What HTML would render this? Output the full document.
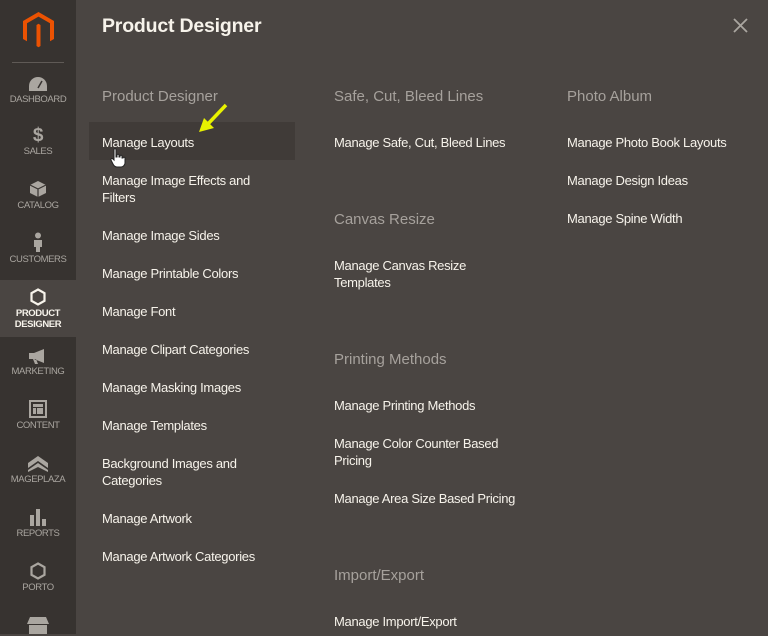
<!DOCTYPE html>
<html><head><style>
body{margin:0;width:768px;height:634px;overflow:hidden;background:#4a4542;font-family:"Liberation Sans",sans-serif;position:relative}
#sb{position:absolute;left:0;top:0;width:76px;height:634px;background:#373330}
.ni{position:absolute;left:0;width:76px;text-align:center;color:#aaa6a0;font-size:9.5px;letter-spacing:-0.4px}
.ni svg{display:block;margin:0 auto 2px}
.act{background:#4a4542;color:#f7f3eb}
.t{position:absolute;color:#f7f3eb;font-size:13px;line-height:17px;letter-spacing:-0.3px}
.h{position:absolute;color:#a6a19c;font-size:15px}
</style></head><body>
<div id="sb">
<svg style="position:absolute;left:23px;top:12px" width="31" height="36" viewBox="0 0 31 36"><path d="M15.5 0 L31 9 V27 L27 29.3 V11.3 L15.5 4.6 L4 11.3 V29.3 L0 27 V9 Z M13.5 13 L15.5 11.8 L17.5 13 V34 L15.5 35.2 L13.5 34 Z" fill="#eb5202"/></svg>
<div style="position:absolute;left:12px;top:62px;width:52px;height:1px;background:#5f5a56"></div>
<div class="ni" style="top:76px"><svg width="20" height="16" viewBox="0 0 20 16"><path d="M10 1A9 9 0 0 0 1 10v5h18v-5A9 9 0 0 0 10 1z" fill="#aaa6a0"/><path d="M10 12L14 5" stroke="#373330" stroke-width="1.5"/></svg>DASHBOARD</div>
<div class="ni" style="top:126px"><div style="font-size:19px;font-weight:bold;line-height:20px">$</div>SALES</div>
<div class="ni" style="top:180px"><svg width="18" height="18" viewBox="0 0 18 18"><path d="M9 1L17 5V13L9 17L1 13V5Z" fill="#aaa6a0"/><path d="M1 5L9 9L17 5M9 9V17" stroke="#373330" stroke-width="1.2" fill="none"/></svg>CATALOG</div>
<div class="ni" style="top:232px"><svg width="12" height="20" viewBox="0 0 12 20"><circle cx="6" cy="3.5" r="3" fill="#aaa6a0"/><path d="M2 8h8v7H8v5H4v-5H2z" fill="#aaa6a0"/></svg>CUSTOMERS</div>
<div class="ni act" style="top:280px;height:57px;padding-top:8px;box-sizing:border-box;line-height:11px;font-weight:bold"><svg width="16" height="18" viewBox="0 0 16 18"><path d="M8 1.5L14.5 5.2V12.8L8 16.5L1.5 12.8V5.2Z" fill="none" stroke="#f7f3eb" stroke-width="2.2"/></svg>PRODUCT<br>DESIGNER</div>
<div class="ni" style="top:348px"><svg width="20" height="16" viewBox="0 0 20 16"><path d="M1 5h5l10-4v14L6 11H1z M5 11l2 5h3l-2-5" fill="#aaa6a0"/></svg>MARKETING</div>
<div class="ni" style="top:400px"><svg width="18" height="18" viewBox="0 0 18 18"><rect x="1" y="1" width="16" height="16" fill="none" stroke="#aaa6a0" stroke-width="2"/><rect x="4" y="4" width="10" height="3" fill="#aaa6a0"/><rect x="4" y="8" width="3" height="6" fill="#aaa6a0"/><rect x="8" y="8" width="6" height="6" fill="#aaa6a0"/></svg>CONTENT</div>
<div class="ni" style="top:456px"><svg width="20" height="16" viewBox="0 0 20 16"><path d="M10 0L20 7V12L10 5L0 12V7Z M10 7L20 14V16L10 11L0 16V14Z" fill="#aaa6a0"/></svg>MAGEPLAZA</div>
<div class="ni" style="top:508px"><svg width="18" height="18" viewBox="0 0 18 18"><rect x="1" y="7" width="4" height="11" fill="#aaa6a0"/><rect x="7" y="1" width="4" height="17" fill="#aaa6a0"/><rect x="13" y="11" width="4" height="7" fill="#aaa6a0"/></svg>REPORTS</div>
<div class="ni" style="top:562px"><svg width="16" height="18" viewBox="0 0 16 18"><path d="M8 1.5L14.5 5.2V12.8L8 16.5L1.5 12.8V5.2Z" fill="none" stroke="#aaa6a0" stroke-width="2.2"/></svg>PORTO</div>
<div class="ni" style="top:616px"><svg width="22" height="18" viewBox="0 0 22 18"><path d="M3 1h16l3 7H0z" fill="#aaa6a0"/><rect x="2" y="9" width="18" height="9" fill="#aaa6a0"/></svg></div>
</div>
<div style="position:absolute;left:102px;top:15px;color:#f7f3eb;font-size:19.5px;font-weight:bold;letter-spacing:-0.2px">Product Designer</div>
<svg style="position:absolute;left:733px;top:18px" width="15" height="15" viewBox="0 0 15 15"><path d="M1 1L14 14M14 1L1 14" stroke="#aaa6a0" stroke-width="1.8"/></svg>
<div style="position:absolute;left:89px;top:122px;width:206px;height:38px;background:#403b38"></div>
<svg style="position:absolute;left:196px;top:102px" width="34" height="32" viewBox="0 0 34 32"><path d="M30 3L10 24" stroke="#e8f200" stroke-width="3.5"/><path d="M3 30L8 16L18 26Z" fill="#e8f200"/></svg>
<svg style="position:absolute;left:110px;top:148px" width="16" height="20" viewBox="0 0 16 20"><path d="M4 1.5c0-1 2-1 2 0V9h1V7c0-1 2-1 2 0v2h1V8c0-1 2-1 2 0v2h1c0-1 2-1 2 0v5c0 2-2 4-4 4H7c-2 0-3-1-4-3L1 12c-.5-1 1-2 2-1l1 1z" fill="#fff" stroke="#222" stroke-width="1"/></svg>
<div class="h" style="left:102px;top:88px">Product Designer</div>
<div class="t" style="left:102px;top:134px">Manage Layouts</div>
<div class="t" style="left:102px;top:172px">Manage Image Effects and<br>Filters</div>
<div class="t" style="left:102px;top:227px">Manage Image Sides</div>
<div class="t" style="left:102px;top:265px">Manage Printable Colors</div>
<div class="t" style="left:102px;top:303px">Manage Font</div>
<div class="t" style="left:102px;top:341px">Manage Clipart Categories</div>
<div class="t" style="left:102px;top:379px">Manage Masking Images</div>
<div class="t" style="left:102px;top:417px">Manage Templates</div>
<div class="t" style="left:102px;top:455px">Background Images and<br>Categories</div>
<div class="t" style="left:102px;top:510px">Manage Artwork</div>
<div class="t" style="left:102px;top:548px">Manage Artwork Categories</div>
<div class="h" style="left:334px;top:88px">Safe, Cut, Bleed Lines</div>
<div class="t" style="left:334px;top:134px">Manage Safe, Cut, Bleed Lines</div>
<div class="h" style="left:334px;top:211px">Canvas Resize</div>
<div class="t" style="left:334px;top:257px">Manage Canvas Resize<br>Templates</div>
<div class="h" style="left:334px;top:351px">Printing Methods</div>
<div class="t" style="left:334px;top:397px">Manage Printing Methods</div>
<div class="t" style="left:334px;top:435px">Manage Color Counter Based<br>Pricing</div>
<div class="t" style="left:334px;top:490px">Manage Area Size Based Pricing</div>
<div class="h" style="left:334px;top:567px">Import/Export</div>
<div class="t" style="left:334px;top:613px">Manage Import/Export</div>
<div class="h" style="left:567px;top:88px">Photo Album</div>
<div class="t" style="left:567px;top:134px">Manage Photo Book Layouts</div>
<div class="t" style="left:567px;top:172px">Manage Design Ideas</div>
<div class="t" style="left:567px;top:210px">Manage Spine Width</div>
</body></html>
